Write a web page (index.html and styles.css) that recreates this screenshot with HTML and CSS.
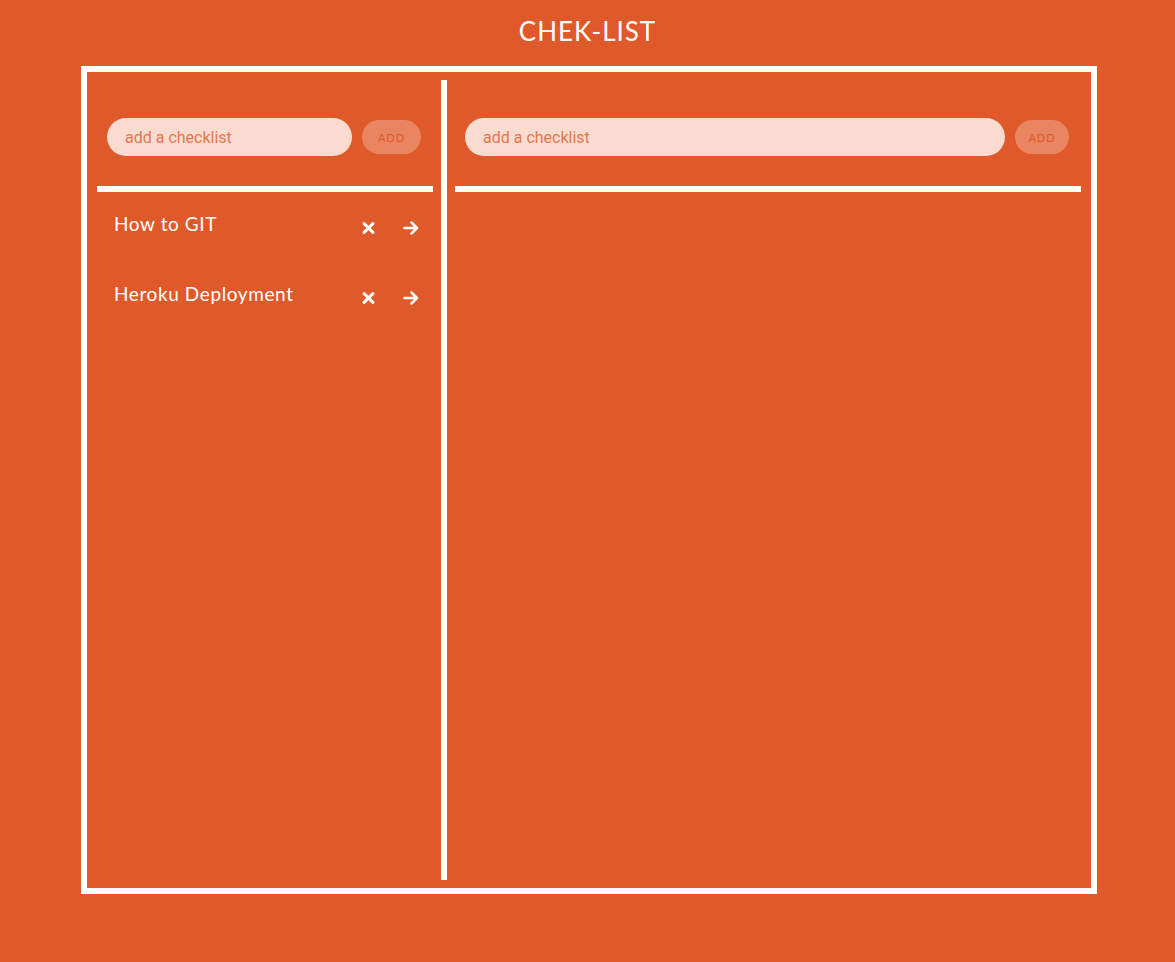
FILE: index.html
```html
<!DOCTYPE html>
<html lang="en">
<head>
<meta charset="utf-8">
<title>CHEK-LIST</title>
<link rel="stylesheet" href="styles.css">
</head>
<body>
<h1 class="title">CHEK-LIST</h1>
<main class="board">
  <section class="panel panel-left">
    <div class="panel-head">
      <form class="add-row">
        <input class="add-input" type="text" placeholder="add a checklist">
        <button class="add-btn" type="button">ADD</button>
      </form>
    </div>
    <ul class="list">
      <li class="item">
        <span class="item-name">How to GIT</span>
        <span class="item-actions">
          <svg class="icon icon-x" viewBox="0 0 12 12" width="13" height="12"><path d="M1.6 1.6 L10.4 10.4 M10.4 1.6 L1.6 10.4" stroke="#fff" stroke-width="3" stroke-linecap="round"/></svg>
          <svg class="icon icon-arrow" viewBox="0 0 16 14" width="16" height="14"><path d="M1.5 7 H14 M8.5 1.5 L14 7 L8.5 12.5" stroke="#fff" stroke-width="2.5" fill="none" stroke-linecap="round" stroke-linejoin="round"/></svg>
        </span>
      </li>
      <li class="item">
        <span class="item-name">Heroku Deployment</span>
        <span class="item-actions">
          <svg class="icon icon-x" viewBox="0 0 12 12" width="13" height="12"><path d="M1.6 1.6 L10.4 10.4 M10.4 1.6 L1.6 10.4" stroke="#fff" stroke-width="3" stroke-linecap="round"/></svg>
          <svg class="icon icon-arrow" viewBox="0 0 16 14" width="16" height="14"><path d="M1.5 7 H14 M8.5 1.5 L14 7 L8.5 12.5" stroke="#fff" stroke-width="2.5" fill="none" stroke-linecap="round" stroke-linejoin="round"/></svg>
        </span>
      </li>
    </ul>
  </section>
  <div class="divider"></div>
  <section class="panel panel-right">
    <div class="panel-head">
      <form class="add-row">
        <input class="add-input" type="text" placeholder="add a checklist">
        <button class="add-btn add-btn-small" type="button">ADD</button>
      </form>
    </div>
  </section>
</main>
</body>
</html>
```
FILE: styles.css
```css
* { box-sizing: border-box; }

html, body {
  margin: 0;
  padding: 0;
  background: #e0592a;
  height: 100%;
}

body {
  font-family: "Lato", "Open Sans", sans-serif;
  color: #fff;
}

.title {
  margin: 0;
  padding-top: 17px;
  height: 66px;
  text-align: center;
  font-family: "Lato", sans-serif;
  font-weight: 400;
  font-size: 26px;
  letter-spacing: 1px;
  line-height: 28px;
  color: #fff;
}

.board {
  margin-left: 81px;
  width: 1016px;
  height: 828px;
  border: 6px solid #fff;
  display: flex;
  align-items: stretch;
}

.panel {
  display: flex;
  flex-direction: column;
}

.panel-left {
  width: 354px;
  padding: 0 8px 0 10px;
}

.panel-right {
  flex: 1;
  padding: 0 10px 0 8px;
}

.divider {
  width: 6px;
  background: #fff;
  margin: 8px 0;
}

.panel-head {
  padding: 46px 12px 0 10px;
  height: 120px;
  border-bottom: 6px solid #fff;
}

.add-row {
  display: flex;
  align-items: center;
  gap: 10px;
  margin: 0;
}

.add-input {
  flex: 1;
  min-width: 0;
  height: 38px;
  border: none;
  outline: none;
  border-radius: 19px;
  background: #f9dccf;
  padding: 0 18px;
  font-family: "Roboto", sans-serif;
  font-size: 16px;
  color: #e87a55;
}

.add-input::placeholder {
  color: #e6764f;
  opacity: 1;
}

.add-btn {
  width: 59px;
  height: 34px;
  border: none;
  border-radius: 17px;
  background: #e98560;
  color: #e05a2a;
  font-family: "Lato", sans-serif;
  font-size: 11px;
  letter-spacing: 1px;
  padding: 0;
}

.add-btn-small {
  width: 54px;
}

.list {
  list-style: none;
  margin: 0;
  padding: 1px 0 0 0;
}

.item {
  display: flex;
  align-items: center;
  justify-content: space-between;
  height: 70px;
  padding: 0 14px 0 17px;
}

.item-name {
  font-family: "Lato", sans-serif;
  font-size: 19px;
  letter-spacing: 0.6px;
  color: #fff;
  position: relative;
  top: -5px;
}

.item-actions {
  display: flex;
  align-items: center;
  gap: 28px;
}

.icon {
  display: block;
}
```
